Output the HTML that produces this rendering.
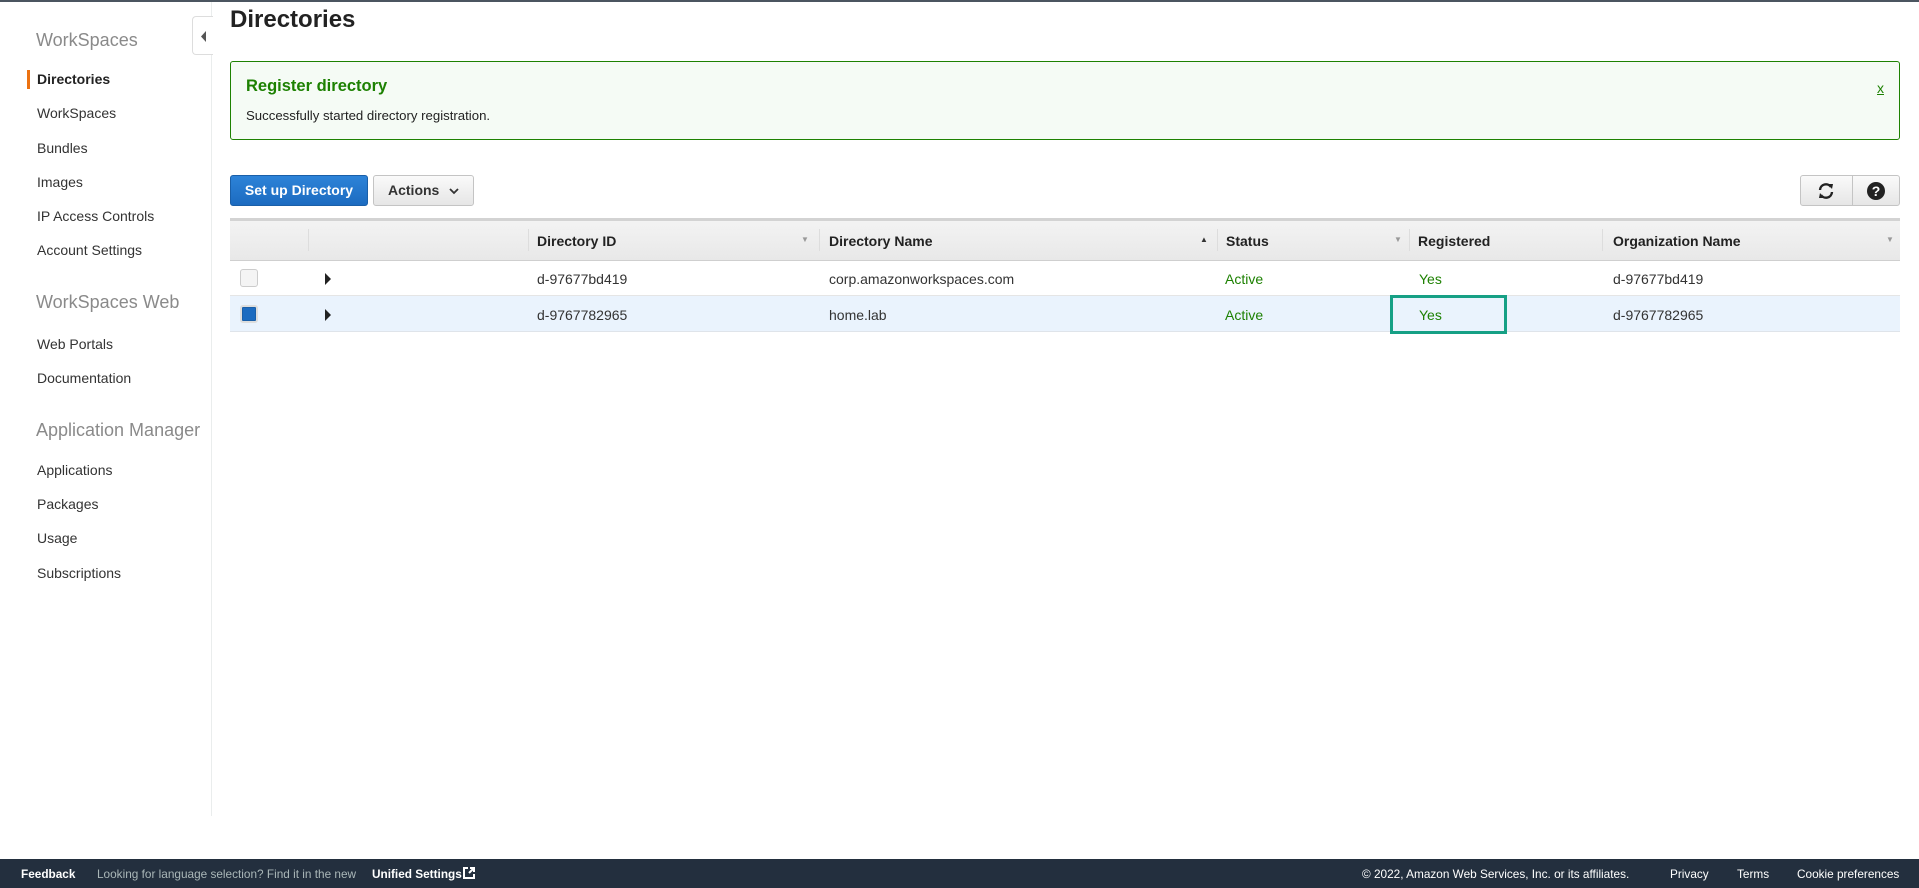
<!DOCTYPE html>
<html><head><meta charset="utf-8"><style>
*{box-sizing:border-box;margin:0;padding:0}
body{width:1919px;height:888px;position:relative;overflow:hidden;background:#fff;font-family:"Liberation Sans",Arial,sans-serif;color:#222}
.a{position:absolute;white-space:nowrap}
.top{left:0;top:0;width:1919px;height:2px;background:#4b5560}
.side{left:0;top:2px;width:212px;height:814px;border-right:1px solid #eaeded}
.sh{font-size:18px;color:#8a8a8a;left:36px}
.si{font-size:14px;color:#333;left:37px}
.tab{left:192px;top:16px;width:21px;height:39px;border:1px solid #ddd;border-right:none;border-radius:4px 0 0 4px;background:#fff}
.foot{left:0;top:859px;width:1919px;height:29px;background:#232f3e;color:#fff;font-size:11.8px}
.foot .a{top:8px}
.th{font-size:14px;font-weight:bold;color:#222;top:233px}
.td{font-size:14px;color:#333}
.g{color:#1d8102}
.sep{top:229px;width:1px;height:22px;background:#ddd}
</style></head><body>
<div class="a top"></div>
<div class="a side"></div>
<div class="a tab"><svg width="21" height="39"><path d="M13 14 L8 19.5 L13 25 Z" fill="#555"/></svg></div>
<div class="a sh" style="top:30px">WorkSpaces</div>
<div class="a" style="left:27px;top:70px;width:3px;height:19px;background:#ec7211"></div>
<div class="a si" style="top:71px;font-weight:bold;color:#222">Directories</div>
<div class="a si" style="top:105px">WorkSpaces</div>
<div class="a si" style="top:140px">Bundles</div>
<div class="a si" style="top:174px">Images</div>
<div class="a si" style="top:208px">IP Access Controls</div>
<div class="a si" style="top:242px">Account Settings</div>
<div class="a sh" style="top:292px">WorkSpaces Web</div>
<div class="a si" style="top:336px">Web Portals</div>
<div class="a si" style="top:370px">Documentation</div>
<div class="a sh" style="top:420px">Application Manager</div>
<div class="a si" style="top:462px">Applications</div>
<div class="a si" style="top:496px">Packages</div>
<div class="a si" style="top:530px">Usage</div>
<div class="a si" style="top:565px">Subscriptions</div>

<div class="a" style="left:230px;top:6px;font-size:24px;font-weight:bold;color:#222">Directories</div>
<div class="a" style="left:230px;top:61px;width:1670px;height:79px;border:1px solid #1d8102;border-radius:3px;background:#f5fbf5"></div>
<div class="a" style="left:246px;top:77px;font-size:16.5px;font-weight:bold;color:#1d8102">Register directory</div>
<div class="a" style="left:246px;top:108px;font-size:13.2px;color:#222">Successfully started directory registration.</div>
<div class="a" style="left:1877px;top:80px;font-size:14px;color:#1d8102;text-decoration:underline">x</div>

<div class="a" style="left:230px;top:175px;width:138px;height:31px;background:linear-gradient(#2d83d8,#1c6bc0);border:1px solid #1a5fa8;border-radius:3px;color:#fff;font-size:14px;font-weight:bold;text-align:center;line-height:29px">Set up Directory</div>
<div class="a" style="left:373px;top:175px;width:101px;height:31px;background:linear-gradient(#fafafa,#e6e6e6);border:1px solid #c4c4c4;border-radius:3px;font-size:14px;font-weight:bold;line-height:29px;padding-left:14px;color:#333">Actions <svg width="10" height="8" style="margin-left:6px"><path d="M1 2 L5 6 L9 2" stroke="#333" stroke-width="1.8" fill="none"/></svg></div>
<div class="a" style="left:1800px;top:175px;width:100px;height:31px;background:linear-gradient(#fafafa,#e6e6e6);border:1px solid #c4c4c4;border-radius:3px"></div>
<div class="a" style="left:1852px;top:176px;width:1px;height:29px;background:#c4c4c4"></div>
<svg class="a" style="left:1816px;top:181px" width="20" height="20" viewBox="0 0 20 20"><path d="M4 9 A6 6 0 0 1 15 6" stroke="#222" stroke-width="2.4" fill="none"/><path d="M16 11 A6 6 0 0 1 5 14" stroke="#222" stroke-width="2.4" fill="none"/><path d="M12 3 L17 3 L16 8Z M8 17 L3 17 L4 12Z" fill="#222"/></svg>
<svg class="a" style="left:1866px;top:181px" width="20" height="20"><circle cx="10" cy="10" r="9" fill="#222"/><text x="10" y="15" font-size="14" font-weight="bold" fill="#fff" text-anchor="middle" font-family="Liberation Sans">?</text></svg>

<div class="a" style="left:230px;top:218px;width:1670px;height:43px;background:linear-gradient(#f3f3f3,#e8e8e8);border-top:3px solid #d3d3d3;border-bottom:1px solid #cfcfcf"></div>
<div class="a sep" style="left:308px"></div><div class="a sep" style="left:528px"></div><div class="a sep" style="left:819px"></div><div class="a sep" style="left:1217px"></div><div class="a sep" style="left:1409px"></div><div class="a sep" style="left:1602px"></div>
<div class="a th" style="left:537px">Directory ID</div>
<div class="a th" style="left:829px">Directory Name</div>
<div class="a th" style="left:1226px">Status</div>
<div class="a th" style="left:1418px">Registered</div>
<div class="a th" style="left:1613px">Organization Name</div>
<div class="a" style="left:801px;top:235px;font-size:8px;color:#999">&#9660;</div>
<div class="a" style="left:1200px;top:235px;font-size:8px;color:#333">&#9650;</div>
<div class="a" style="left:1394px;top:235px;font-size:8px;color:#999">&#9660;</div>
<div class="a" style="left:1886px;top:235px;font-size:8px;color:#999">&#9660;</div>

<div class="a" style="left:230px;top:261px;width:1670px;height:35px;border-bottom:1px solid #e5e5e5"></div>
<div class="a" style="left:230px;top:296px;width:1670px;height:36px;background:#eaf3fd;border-bottom:1px solid #dfe4ea"></div>
<div class="a" style="left:240px;top:269px;width:18px;height:18px;border:1px solid #ccc;border-radius:3px;background:#f4f4f4"></div>
<div class="a" style="left:240px;top:305px;width:18px;height:18px;border:2px solid #ddd;border-radius:3px;background:#1c6bc0;box-shadow:inset 0 0 0 1px #1a5fa8"></div>
<svg class="a" style="left:324px;top:272px" width="8" height="14"><path d="M1 1 L7 7 L1 13Z" fill="#222"/></svg>
<svg class="a" style="left:324px;top:308px" width="8" height="14"><path d="M1 1 L7 7 L1 13Z" fill="#222"/></svg>
<div class="a td" style="left:537px;top:271px">d-97677bd419</div>
<div class="a td" style="left:829px;top:271px">corp.amazonworkspaces.com</div>
<div class="a td g" style="left:1225px;top:271px">Active</div>
<div class="a td g" style="left:1419px;top:271px">Yes</div>
<div class="a td" style="left:1613px;top:271px">d-97677bd419</div>
<div class="a td" style="left:537px;top:307px">d-9767782965</div>
<div class="a td" style="left:829px;top:307px">home.lab</div>
<div class="a td g" style="left:1225px;top:307px">Active</div>
<div class="a td g" style="left:1419px;top:307px">Yes</div>
<div class="a td" style="left:1613px;top:307px">d-9767782965</div>
<div class="a" style="left:1390px;top:295px;width:117px;height:39px;border:3px solid #16a085"></div>

<div class="a foot">
<span class="a" style="left:21px;font-weight:bold">Feedback</span>
<span class="a" style="left:97px;color:#aab7b8">Looking for language selection? Find it in the new</span>
<span class="a" style="left:372px;font-weight:bold">Unified Settings</span>
<svg class="a" style="left:462px;top:7px" width="14" height="14"><path d="M6 2H2V12H12V8" stroke="#fff" stroke-width="2" fill="none"/><path d="M7 7L12 2M8 2H12V6" stroke="#fff" stroke-width="2" fill="none"/></svg>
<span class="a" style="left:1362px">© 2022, Amazon Web Services, Inc. or its affiliates.</span>
<span class="a" style="left:1670px">Privacy</span>
<span class="a" style="left:1737px">Terms</span>
<span class="a" style="left:1797px">Cookie preferences</span>
</div>
</body></html>
